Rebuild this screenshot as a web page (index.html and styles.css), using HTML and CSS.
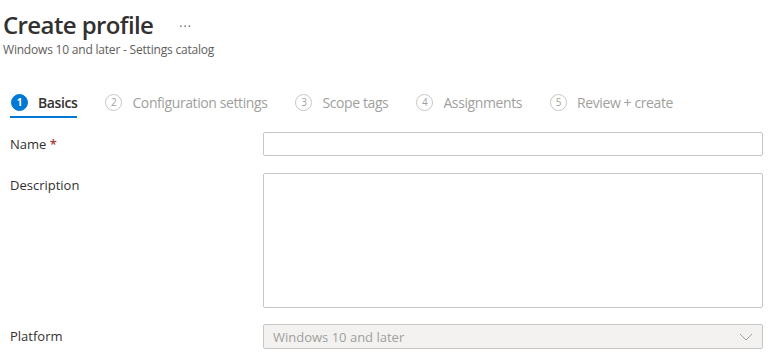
FILE: index.html
```html
<!DOCTYPE html>
<html>
<head>
<meta charset="utf-8">
<link rel="stylesheet" href="styles.css">
</head>
<body>
<header class="header">
  <div class="title-row">
    <h1 class="title">Create profile</h1>
    <span class="more">&middot;&middot;&middot;</span>
  </div>
  <div class="subtitle">Windows 10 and later - Settings catalog</div>
</header>
<nav class="steps">
  <div class="step active"><span class="num">1</span><span class="label">Basics</span></div>
  <div class="step"><span class="num">2</span><span class="label">Configuration settings</span></div>
  <div class="step"><span class="num">3</span><span class="label">Scope tags</span></div>
  <div class="step"><span class="num">4</span><span class="label">Assignments</span></div>
  <div class="step"><span class="num">5</span><span class="label">Review + create</span></div>
</nav>
<form class="form">
  <div class="row">
    <label class="field-label">Name <span class="req">*</span></label>
    <input class="input" type="text">
  </div>
  <div class="row">
    <label class="field-label">Description</label>
    <textarea class="textarea"></textarea>
  </div>
  <div class="row">
    <label class="field-label">Platform</label>
    <div class="select">
      <span>Windows 10 and later</span>
      <svg class="chev" width="14" height="8" viewBox="0 0 14 8"><path d="M1 1 L7 7 L13 1" fill="none" stroke="#a19f9d" stroke-width="1"/></svg>
    </div>
  </div>
</form>
</body>
</html>
```
FILE: styles.css
```css
* { box-sizing: border-box; }
body {
  margin: 0;
  font-family: "Open Sans", "Noto Sans", sans-serif;
  color: #323130;
  background: #fff;
}
.header { padding: 8px 0 0 3px; }
.title-row { display: flex; align-items: center; height: 34px; }
.title {
  margin: 0;
  font-size: 24px;
  font-weight: 600;
  letter-spacing: -0.6px;
  line-height: 34px;
}
.more {
  margin-left: 26px;
  font-size: 12px;
  letter-spacing: 1px;
  color: #605e5c;
  margin-top: 2px;
}
.subtitle {
  font-size: 12px;
  color: #605e5c;
  line-height: 16px;
  letter-spacing: -0.2px;
}
.steps {
  display: flex;
  gap: 27px;
  padding: 30px 0 0 10px;
}
.step {
  display: flex;
  align-items: center;
  height: 30px;
  color: #a19f9d;
  font-size: 14px;
  letter-spacing: -0.4px;
  border-bottom: 2px solid transparent;
}
.step.active {
  color: #323130;
  font-weight: 600;
  border-bottom-color: #0078d4;
}
.num {
  width: 17px;
  height: 17px;
  border-radius: 50%;
  border: 1px solid #c8c6c4;
  display: inline-flex;
  align-items: center;
  justify-content: center;
  font-size: 10px;
  letter-spacing: 0;
  margin-left: 1px;
  margin-right: 10px;
  color: #a19f9d;
  font-weight: 400;
}
.step.active .num {
  background: #0078d4;
  border-color: #0078d4;
  color: #fff;
  font-weight: 700;
}
.form { padding: 14px 5px 0 10px; }
.row { display: flex; align-items: flex-start; margin-bottom: 16px; }
.row:first-child { margin-bottom: 17px; }
.field-label {
  width: 253px;
  flex: none;
  font-size: 13px;
  line-height: 24px;
  color: #323130;
}
.req { color: #a4373a; font-weight: 600; }
.input {
  width: 500px;
  height: 24px;
  border: 1px solid #c8c6c4;
  border-radius: 2px;
  margin: 0;
}
.textarea {
  width: 500px;
  height: 135px;
  border: 1px solid #c8c6c4;
  border-radius: 2px;
  margin: 0;
  resize: none;
  display: block;
}
.select {
  width: 500px;
  height: 25px;
  border: 1px solid #c8c6c4;
  border-radius: 2px;
  background: #f3f2f1;
  display: flex;
  align-items: center;
  justify-content: space-between;
  padding: 0 9px 0 9px;
  font-size: 13px;
  color: #a19f9d;
}
.chev { margin-top: 1px; }
```
